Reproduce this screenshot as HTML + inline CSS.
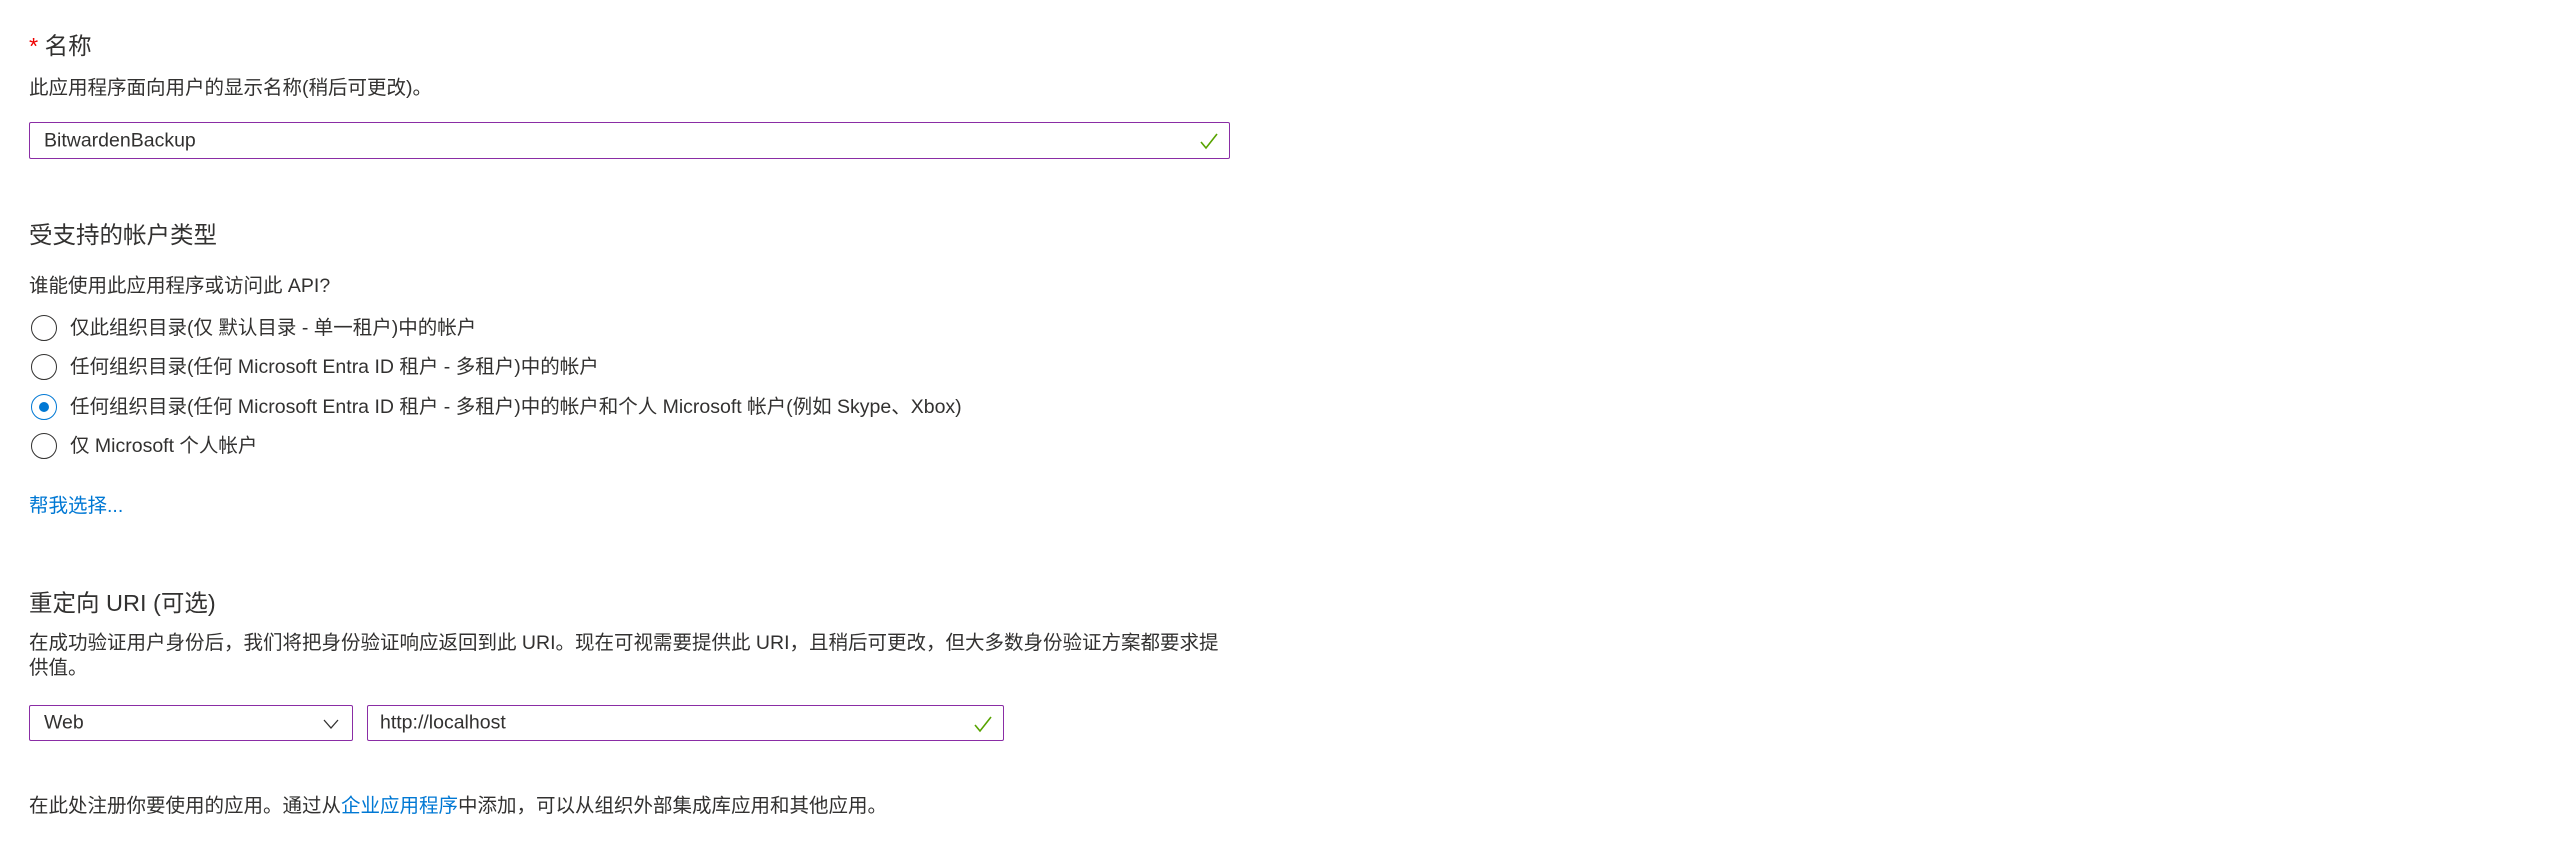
<!DOCTYPE html>
<html><head><meta charset="utf-8"><style>
body{margin:0;width:2560px;height:847px;background:#fff;position:relative;overflow:hidden;font-family:"Liberation Sans","Noto Sans CJK SC",sans-serif;color:#323130;}
.t{position:absolute;white-space:nowrap;font-size:19.5px;line-height:30px;}
.h{font-size:23.5px;line-height:34px;}
.box{position:absolute;border:1.5px solid #8a2da5;border-radius:2px;box-sizing:border-box;background:#fff;}
.box span{position:absolute;left:14px;top:50%;transform:translateY(-50%);font-size:19.5px;}
.chk{position:absolute;right:10px;top:8px;}
.r{position:absolute;left:31px;width:26px;height:26px;border:1.5px solid #323130;border-radius:50%;box-sizing:border-box;}
a{color:#0078d4;text-decoration:none;}
</style></head><body>
<div class="t h" style="left:29px;top:29px"><span style="color:#e00">*</span> 名称</div>
<div class="t" style="left:29px;top:73px">此应用程序面向用户的显示名称(稍后可更改)。</div>
<div class="box" style="left:29px;top:122px;width:1201px;height:37px"><span>BitwardenBackup</span>
<svg class="chk" width="20" height="20" viewBox="0 0 20 20"><path d="M2 11 L7 17 L18 3" fill="none" stroke="#57a300" stroke-width="1.6"/></svg></div>
<div class="t h" style="left:29px;top:218px">受支持的帐户类型</div>
<div class="t" style="left:29px;top:271px">谁能使用此应用程序或访问此 API?</div>
<div class="r" style="top:315px"></div><div class="t" style="left:70px;top:313px">仅此组织目录(仅 默认目录 - 单一租户)中的帐户</div>
<div class="r" style="top:354px"></div><div class="t" style="left:70px;top:352px">任何组织目录(任何 Microsoft Entra ID 租户 - 多租户)中的帐户</div>
<div class="r" style="top:394px;border-color:#0078d4"><div style="position:absolute;left:6.5px;top:6.5px;width:10px;height:10px;border-radius:50%;background:#0078d4"></div></div><div class="t" style="left:70px;top:392px">任何组织目录(任何 Microsoft Entra ID 租户 - 多租户)中的帐户和个人 Microsoft 帐户(例如 Skype、Xbox)</div>
<div class="r" style="top:433px"></div><div class="t" style="left:70px;top:431px">仅 Microsoft 个人帐户</div>
<div class="t" style="left:29px;top:491px"><a>帮我选择...</a></div>
<div class="t h" style="left:29px;top:586px">重定向 URI (可选)</div>
<div class="t" style="left:29px;top:631px;line-height:25px">在成功验证用户身份后，我们将把身份验证响应返回到此 URI。现在可视需要提供此 URI，且稍后可更改，但大多数身份验证方案都要求提<br>供值。</div>
<div class="box" style="left:29px;top:705px;width:324px;height:36px"><span>Web</span>
<svg style="position:absolute;right:12px;top:9px" width="18" height="18" viewBox="0 0 18 18"><path d="M2 5 L9 13 L16 5" fill="none" stroke="#323130" stroke-width="1.3"/></svg></div>
<div class="box" style="left:367px;top:705px;width:637px;height:36px"><span style="left:12px">http://localhost</span>
<svg class="chk" width="20" height="20" viewBox="0 0 20 20"><path d="M2 11 L7 17 L18 3" fill="none" stroke="#57a300" stroke-width="1.6"/></svg></div>
<div class="t" style="left:29px;top:791px">在此处注册你要使用的应用。通过从<a>企业应用程序</a>中添加，可以从组织外部集成库应用和其他应用。</div>
</body></html>
